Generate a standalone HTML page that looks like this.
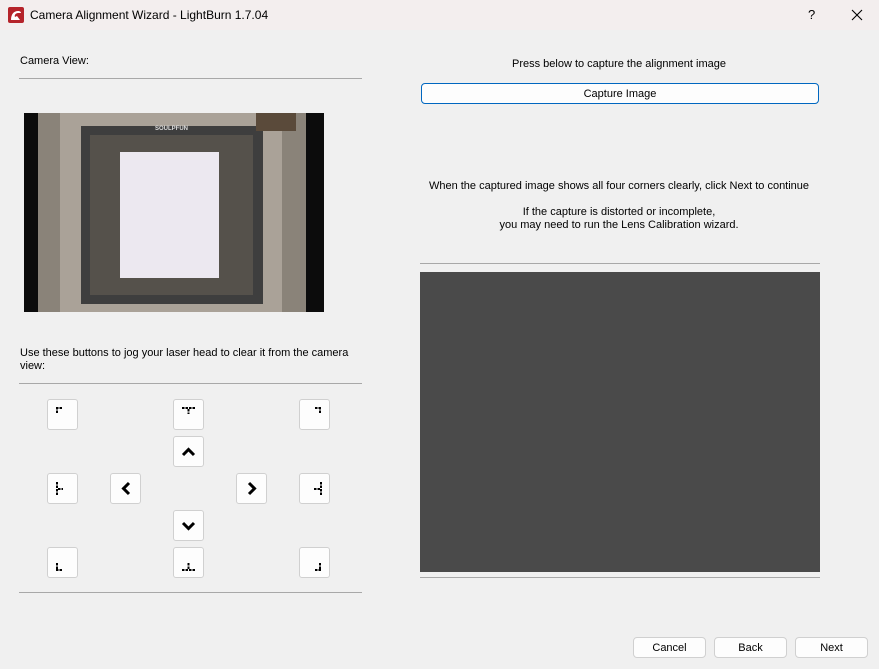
<!DOCTYPE html>
<html><head><meta charset="utf-8"><style>
*{margin:0;padding:0;box-sizing:border-box}
body{width:879px;height:669px;background:#f0f0f0;font-family:"Liberation Sans",sans-serif;font-size:11px;color:#000;position:relative;overflow:hidden}
.a{position:absolute}
.tb{left:0;top:0;width:879px;height:30px;background:#f3eeee}
.hr{position:absolute;height:1px;background:#a8a8a8}
.jb{position:absolute;width:31px;height:31px;background:#fdfdfd;border:1px solid #d0d0d0;border-radius:3px}
.jb svg{position:absolute;left:-1px;top:-1px}
.btn{position:absolute;height:21px;background:#fdfdfd;border:1px solid #d0d0d0;border-radius:4px;text-align:center;line-height:21px;font-size:11px}
.c{text-align:center;width:420px;left:409px}
</style></head><body>
<div class="a tb"></div>
<svg class="a" style="left:8px;top:7px" width="16" height="16" viewBox="0 0 16 16"><rect width="16" height="16" rx="2" fill="#b5232a"/><path d="M3 13 C3 7 6 4 10 4 C12 4 13 5 13 6 L10 6 C8 6 6 8 7 10 L9 9 L12 13 Z" fill="#fff"/></svg>
<div class="a" style="left:30px;top:8px;font-size:12px">Camera Alignment Wizard - LightBurn 1.7.04</div>
<div class="a" style="left:808px;top:7px;font-size:13px">?</div>
<svg class="a" style="left:851px;top:9px" width="12" height="12"><path d="M1 1L11 11M11 1L1 11" stroke="#000" stroke-width="1.1"/></svg>

<div class="a" style="left:20px;top:55px">Camera View:</div>
<div class="hr" style="left:19px;top:78px;width:343px"></div>

<div class="a" style="left:24px;top:113px;width:300px;height:199px;background:#0c0c0c;overflow:hidden">
 <div class="a" style="left:14px;top:0;width:268px;height:199px;background:#8a8379"></div>
 <div class="a" style="left:36px;top:0;width:222px;height:199px;background:#aaa298"></div>
 <div class="a" style="left:57px;top:13px;width:182px;height:178px;background:#3e3e3e"></div>
 <div class="a" style="left:66px;top:22px;width:163px;height:160px;background:#55514b"></div>
 <div class="a" style="left:96px;top:39px;width:99px;height:126px;background:#ece8f0"></div>
 <div class="a" style="left:131px;top:13px;font-size:6px;color:#ddd;font-weight:bold">SOULPFUN</div>
 <div class="a" style="left:232px;top:0;width:40px;height:18px;background:#5a4a3a"></div>
</div>

<div class="a" style="left:20px;top:347px;width:340px;line-height:13px">Use these buttons to jog your laser head to clear it from the camera view:</div>
<div class="hr" style="left:19px;top:383px;width:343px"></div>

<div class="jb" style="left:47px;top:399px"><svg width="31" height="31"><path d="M10 8v6M9 9h7" stroke="#000" stroke-width="2" stroke-dasharray="2.5 1"/></svg></div>
<div class="jb" style="left:173px;top:399px"><svg width="31" height="31"><path d="M9 9h13M15.5 10v5" stroke="#000" stroke-width="2" stroke-dasharray="2.5 1"/></svg></div>
<div class="jb" style="left:299px;top:399px"><svg width="31" height="31"><path d="M21 8v7M22 9h-7" stroke="#000" stroke-width="2" stroke-dasharray="2.5 1"/></svg></div>
<div class="jb" style="left:173px;top:436px"><svg width="31" height="31"><path d="M10 19l5.5-5.5 5.5 5.5" stroke="#000" stroke-width="3" fill="none"/></svg></div>
<div class="jb" style="left:47px;top:473px"><svg width="31" height="31"><path d="M10 9v14M11 16h5" stroke="#000" stroke-width="2" stroke-dasharray="2.5 1"/></svg></div>
<div class="jb" style="left:110px;top:473px"><svg width="31" height="31"><path d="M19 10l-5.5 5.5 5.5 5.5" stroke="#000" stroke-width="3" fill="none"/></svg></div>
<div class="jb" style="left:236px;top:473px"><svg width="31" height="31"><path d="M13 10l5.5 5.5-5.5 5.5" stroke="#000" stroke-width="3" fill="none"/></svg></div>
<div class="jb" style="left:299px;top:473px"><svg width="31" height="31"><path d="M22 9v14M21 16h-6" stroke="#000" stroke-width="2" stroke-dasharray="2.5 1"/></svg></div>
<div class="jb" style="left:173px;top:510px"><svg width="31" height="31"><path d="M10 13l5.5 5.5 5.5-5.5" stroke="#000" stroke-width="3" fill="none"/></svg></div>
<div class="jb" style="left:47px;top:547px"><svg width="31" height="31"><path d="M10 16v7M9 23h7" stroke="#000" stroke-width="2" stroke-dasharray="2.5 1"/></svg></div>
<div class="jb" style="left:173px;top:547px"><svg width="31" height="31"><path d="M9 23h13M15.5 22v-6" stroke="#000" stroke-width="2" stroke-dasharray="2.5 1"/></svg></div>
<div class="jb" style="left:299px;top:547px"><svg width="31" height="31"><path d="M21 16v7M22 23h-7" stroke="#000" stroke-width="2" stroke-dasharray="2.5 1"/></svg></div>

<div class="hr" style="left:19px;top:592px;width:343px"></div>

<div class="a c" style="top:58px">Press below to capture the alignment image</div>
<div class="btn" style="left:421px;top:83px;width:398px;border-color:#0067c0;line-height:20px">Capture Image</div>
<div class="a c" style="top:180px">When the captured image shows all four corners clearly, click Next to continue</div>
<div class="a c" style="top:206px;line-height:13px">If the capture is distorted or incomplete,<br>you may need to run the Lens Calibration wizard.</div>
<div class="hr" style="left:420px;top:263px;width:400px"></div>
<div class="a" style="left:420px;top:272px;width:400px;height:300px;background:#4a4a4a"></div>
<div class="hr" style="left:420px;top:577px;width:400px"></div>

<div class="btn" style="left:633px;top:637px;width:73px">Cancel</div>
<div class="btn" style="left:714px;top:637px;width:73px">Back</div>
<div class="btn" style="left:795px;top:637px;width:73px">Next</div>
</body></html>
